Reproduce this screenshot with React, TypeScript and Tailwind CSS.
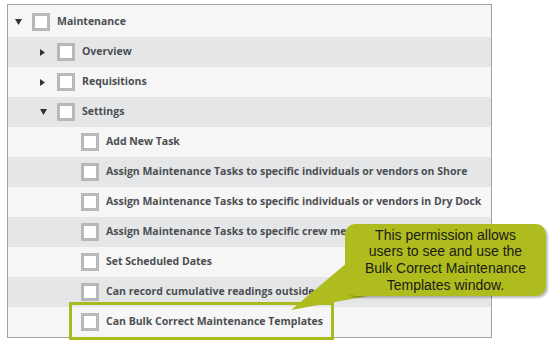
import React from "react";

type Row = { label: string; level: number; toggle?: "open" | "closed" };

const rows: Row[] = [
  { label: "Maintenance", level: 0, toggle: "open" },
  { label: "Overview", level: 1, toggle: "closed" },
  { label: "Requisitions", level: 1, toggle: "closed" },
  { label: "Settings", level: 1, toggle: "open" },
  { label: "Add New Task", level: 2 },
  { label: "Assign Maintenance Tasks to specific individuals or vendors on Shore", level: 2 },
  { label: "Assign Maintenance Tasks to specific individuals or vendors in Dry Dock", level: 2 },
  { label: "Assign Maintenance Tasks to specific crew members", level: 2 },
  { label: "Set Scheduled Dates", level: 2 },
  { label: "Can record cumulative readings outside range", level: 2 },
  { label: "Can Bulk Correct Maintenance Templates", level: 2 },
];

function Tri({ kind }: { kind: "open" | "closed" }) {
  if (kind === "open")
    return (
      <svg width="7" height="6" viewBox="0 0 7 6">
        <polygon points="0,0 7,0 3.5,6" fill="#333" />
      </svg>
    );
  return (
    <svg width="5" height="7" viewBox="0 0 5 7">
      <polygon points="0,0 5,3.5 0,7" fill="#333" />
    </svg>
  );
}

export default function App() {
  const pl = ["pl-[7px]", "pl-[32px]", "pl-[56px]"];
  return (
    <div className="relative w-[552px] h-[342px] bg-white overflow-hidden" style={{ fontFamily: "'Open Sans', sans-serif" }}>
      <div className="absolute left-[7px] top-[4px] w-[485px] border border-[#a3a3a3] overflow-hidden">
        {rows.map((r, i) => (
          <div
            key={i}
            className={`flex items-center ${i === 0 ? "h-[32px] pt-[1px]" : "h-[30px]"} ${pl[r.level]} ${i % 2 === 0 ? "bg-[#f6f6f6]" : "bg-[#e5e6e7]"} whitespace-nowrap`}
          >
            <div className="w-[17px] shrink-0 flex items-center">{r.toggle && <Tri kind={r.toggle} />}</div>
            <div className="w-[18px] h-[18px] border-[3px] border-[#b8b8b8] bg-white shrink-0" />
            <span className="ml-[7px] text-[10.5px] font-bold text-[#4b4e52]">{r.label}</span>
          </div>
        ))}
      </div>

      <div className="absolute left-[69px] top-[302px] w-[265px] h-[38px] border-[3px] border-[#a9ba1d]" />

      <svg className="absolute left-0 top-0" width="552" height="342">
        <polygon points="291,310 348,262 368,296" fill="#afbc1e" />
      </svg>
      <div
        className="absolute left-[345px] top-[224px] w-[201px] h-[72px] rounded-[10px] bg-[#afbc1e] flex flex-col items-center justify-center text-[14px] leading-[16.7px] text-[#1a1a1a] shadow-[2px_2px_2px_rgba(0,0,0,0.25)]"
        style={{ fontFamily: "'Liberation Sans', Arial, sans-serif" }}
      >
        <div>This permission allows</div>
        <div>users to see and use the</div>
        <div>Bulk Correct Maintenance</div>
        <div>Templates window.</div>
      </div>
    </div>
  );
}
